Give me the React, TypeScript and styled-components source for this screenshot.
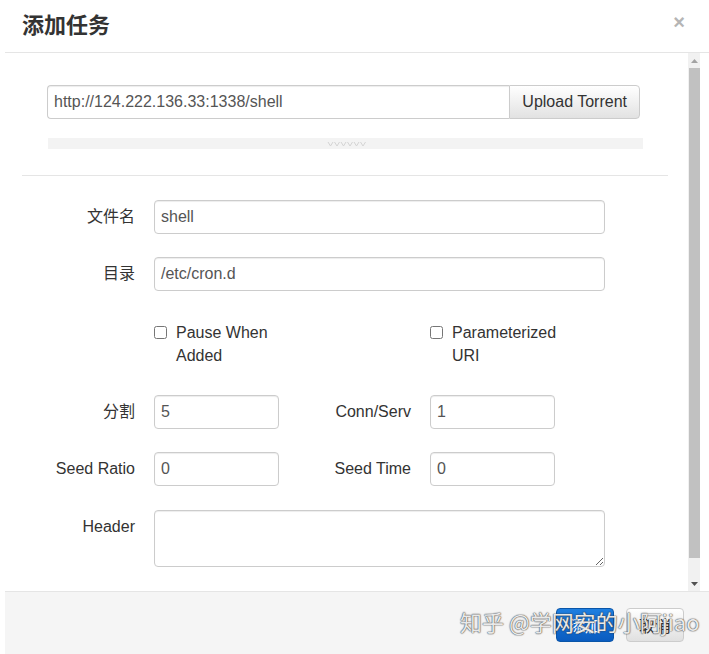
import React from "react";
import styled, { createGlobalStyle } from "styled-components";

const Global = createGlobalStyle`
  html, body { margin: 0; padding: 0; background: #fff; }
  body {
    font-family: "Liberation Sans", Arial, "Noto Sans CJK SC", sans-serif;
    font-size: 16px;
    color: #333;
  }
  * { box-sizing: border-box; }
`;

const Dialog = styled.div`
  margin-left: 5px;
  width: 704px;
  height: 654px;
  display: flex;
  flex-direction: column;
  background: #fff;
`;

const Header = styled.div`
  height: 53px;
  flex: none;
  display: flex;
  align-items: flex-start;
  justify-content: space-between;
  padding: 9px 24px 0 17px;
  border-bottom: 1px solid #e5e5e5;
`;

const Title = styled.h4`
  margin: 0;
  font-family: "Noto Sans CJK SC", "Liberation Sans", sans-serif;
  font-size: 22px;
  line-height: 28px;
  font-weight: 700;
  color: #333;
`;

const Close = styled.span`
  font-family: "Liberation Sans", Arial, sans-serif;
  font-size: 20px;
  font-weight: 700;
  line-height: 20px;
  margin-top: 3px;
  color: #b5b5b5;
`;

const Body = styled.div`
  height: 538px;
  flex: none;
  display: flex;
`;

const Content = styled.div`
  flex: 1;
  padding: 0 20px 0 17px;
`;

const UploadSection = styled.div`
  padding: 32px 25px 0;
`;

const InputGroup = styled.div`
  display: flex;
  height: 34px;
  margin-right: 3px;
`;

const UrlInput = styled.div`
  flex: 1;
  border: 1px solid #ccc;
  border-right: none;
  border-radius: 4px 0 0 4px;
  box-shadow: inset 0 1px 1px rgba(0, 0, 0, 0.075);
  padding: 0 6px;
  display: flex;
  align-items: center;
  color: #555;
  font-size: 16px;
`;

const GroupButton = styled.div`
  flex: none;
  border: 1px solid #ccc;
  border-radius: 0 4px 4px 0;
  background: linear-gradient(to bottom, #ffffff 0%, #e2e2e2 100%);
  padding: 0 12px;
  display: flex;
  align-items: center;
  color: #333;
  font-size: 16px;
`;

const Bar = styled.div`
  margin: 19px 0 0 1px;
  height: 11px;
  background: #f3f3f3;
  display: flex;
  justify-content: center;
  align-items: center;
`;

const Divider = styled.div`
  margin-top: 26px;
  border-top: 1px solid #e5e5e5;
`;

const Form = styled.div`
  padding-top: 24px;
`;

const Row = styled.div<{ $mb?: number }>`
  display: flex;
  align-items: flex-start;
  margin-bottom: ${(p) => p.$mb ?? 23}px;
`;

const Label = styled.label<{ $w: number }>`
  flex: none;
  width: ${(p) => p.$w}px;
  margin-right: 19px;
  padding-top: 7px;
  line-height: 20px;
  text-align: right;
  color: #333;
  font-size: 16px;
`;

const TextBox = styled.div<{ $w: number; $h?: number }>`
  flex: none;
  width: ${(p) => p.$w}px;
  height: ${(p) => p.$h ?? 34}px;
  border: 1px solid #ccc;
  border-radius: 4px;
  box-shadow: inset 0 1px 1px rgba(0, 0, 0, 0.075);
  padding: 0 6px;
  display: flex;
  align-items: center;
  color: #555;
  font-size: 16px;
`;

const TextArea = styled.textarea`
  flex: none;
  width: 451px;
  height: 57px;
  border: 1px solid #ccc;
  border-radius: 4px;
  box-shadow: inset 0 1px 1px rgba(0, 0, 0, 0.075);
  padding: 6px;
  font-family: inherit;
  font-size: 16px;
  color: #555;
  outline: none;
  resize: vertical;
`;

const CheckRow = styled.div`
  display: flex;
  padding: 7px 0 0 132px;
  margin-bottom: 28px;
`;

const CheckItem = styled.label<{ $w: number }>`
  flex: none;
  width: ${(p) => p.$w}px;
  display: flex;
  align-items: flex-start;
`;

const CheckBox = styled.input`
  margin: 5px 9px 0 0;
  width: 13px;
  height: 13px;
  flex: none;
`;

const CheckText = styled.span`
  width: 112px;
  line-height: 23px;
  font-size: 16px;
  color: #333;
`;

const Scrollbar = styled.div`
  flex: none;
  width: 12px;
  margin-right: 9px;
  background: #f1f1f1;
  display: flex;
  flex-direction: column;
  align-items: center;
`;

const Arrow = styled.div`
  height: 15px;
  width: 100%;
  display: flex;
  align-items: center;
  justify-content: center;
`;

const Thumb = styled.div`
  width: 11px;
  height: 490px;
  background: #c1c1c1;
`;

const Spacer = styled.div`
  flex: 1;
`;

const Footer = styled.div`
  position: relative;
  flex: 1;
  border-top: 1px solid #e5e5e5;
  background: #f5f5f5;
  display: flex;
  justify-content: flex-end;
  align-items: flex-start;
  gap: 12px;
  padding: 16px 25px 0 0;
`;

const Button = styled.div<{ $primary?: boolean }>`
  height: 34px;
  padding: 0 12px;
  display: flex;
  align-items: center;
  border-radius: 4px;
  font-family: "Noto Sans CJK SC", "Liberation Sans", sans-serif;
  font-size: 16px;
  border: 1px solid ${(p) => (p.$primary ? "#0a55a8" : "#ccc")};
  color: ${(p) => (p.$primary ? "#fff" : "#333")};
  background: ${(p) =>
    p.$primary
      ? "linear-gradient(to bottom, #1f7fe0 0%, #0a5cc0 100%)"
      : "linear-gradient(to bottom, #ffffff 0%, #e0e0e0 100%)"};
`;

const Watermark = styled.div`
  position: absolute;
  left: 455px;
  top: 14px;
  font-family: "Noto Sans CJK SC", sans-serif;
  font-size: 22px;
  line-height: 30px;
  white-space: nowrap;
  color: rgba(255, 255, 255, 0.88);
  text-shadow: 0 0 1px #555, 0 0 1px #555, 0 0 2px rgba(0, 0, 0, 0.4);
  pointer-events: none;
`;

const Grip = () => (
  <svg width="40" height="6" viewBox="0 0 40 6">
    {[0, 1, 2, 3, 4, 5].map((i) => (
      <path
        key={i}
        d={`M${2 + i * 6.5} 1 L${4.5 + i * 6.5} 5 L${7 + i * 6.5} 1`}
        fill="none"
        stroke="#d4d4d4"
        strokeWidth="1"
      />
    ))}
  </svg>
);

const Tri = ({ up, color }: { up?: boolean; color: string }) => (
  <svg width="7" height="4" viewBox="0 0 7 4">
    <path d={up ? "M0 4 L3.5 0 L7 4 Z" : "M0 0 L3.5 4 L7 0 Z"} fill={color} />
  </svg>
);

export default function App() {
  return (
    <>
      <Global />
      <Dialog>
        <Header>
          <Title>添加任务</Title>
          <Close>×</Close>
        </Header>
        <Body>
          <Content>
            <UploadSection>
              <InputGroup>
                <UrlInput>http://124.222.136.33:1338/shell</UrlInput>
                <GroupButton>Upload Torrent</GroupButton>
              </InputGroup>
              <Bar>
                <Grip />
              </Bar>
            </UploadSection>
            <Divider />
            <Form>
              <Row>
                <Label $w={113}>文件名</Label>
                <TextBox $w={451}>shell</TextBox>
              </Row>
              <Row>
                <Label $w={113}>目录</Label>
                <TextBox $w={451}>/etc/cron.d</TextBox>
              </Row>
              <CheckRow>
                <CheckItem $w={276}>
                  <CheckBox type="checkbox" />
                  <CheckText>Pause When Added</CheckText>
                </CheckItem>
                <CheckItem $w={140}>
                  <CheckBox type="checkbox" />
                  <CheckText>Parameterized URI</CheckText>
                </CheckItem>
              </CheckRow>
              <Row>
                <Label $w={113}>分割</Label>
                <TextBox $w={125}>5</TextBox>
                <Label $w={132}>Conn/Serv</Label>
                <TextBox $w={125}>1</TextBox>
              </Row>
              <Row $mb={24}>
                <Label $w={113}>Seed Ratio</Label>
                <TextBox $w={125}>0</TextBox>
                <Label $w={132}>Seed Time</Label>
                <TextBox $w={125}>0</TextBox>
              </Row>
              <Row>
                <Label $w={113}>Header</Label>
                <TextArea />
              </Row>
            </Form>
          </Content>
          <Scrollbar>
            <Arrow>
              <Tri up color="#a3a3a3" />
            </Arrow>
            <Thumb />
            <Spacer />
            <Arrow>
              <Tri color="#505050" />
            </Arrow>
          </Scrollbar>
        </Body>
        <Footer>
          <Button $primary>添加</Button>
          <Button>取消</Button>
          <Watermark>知乎 @学网安的小阿jiao</Watermark>
        </Footer>
      </Dialog>
    </>
  );
}
